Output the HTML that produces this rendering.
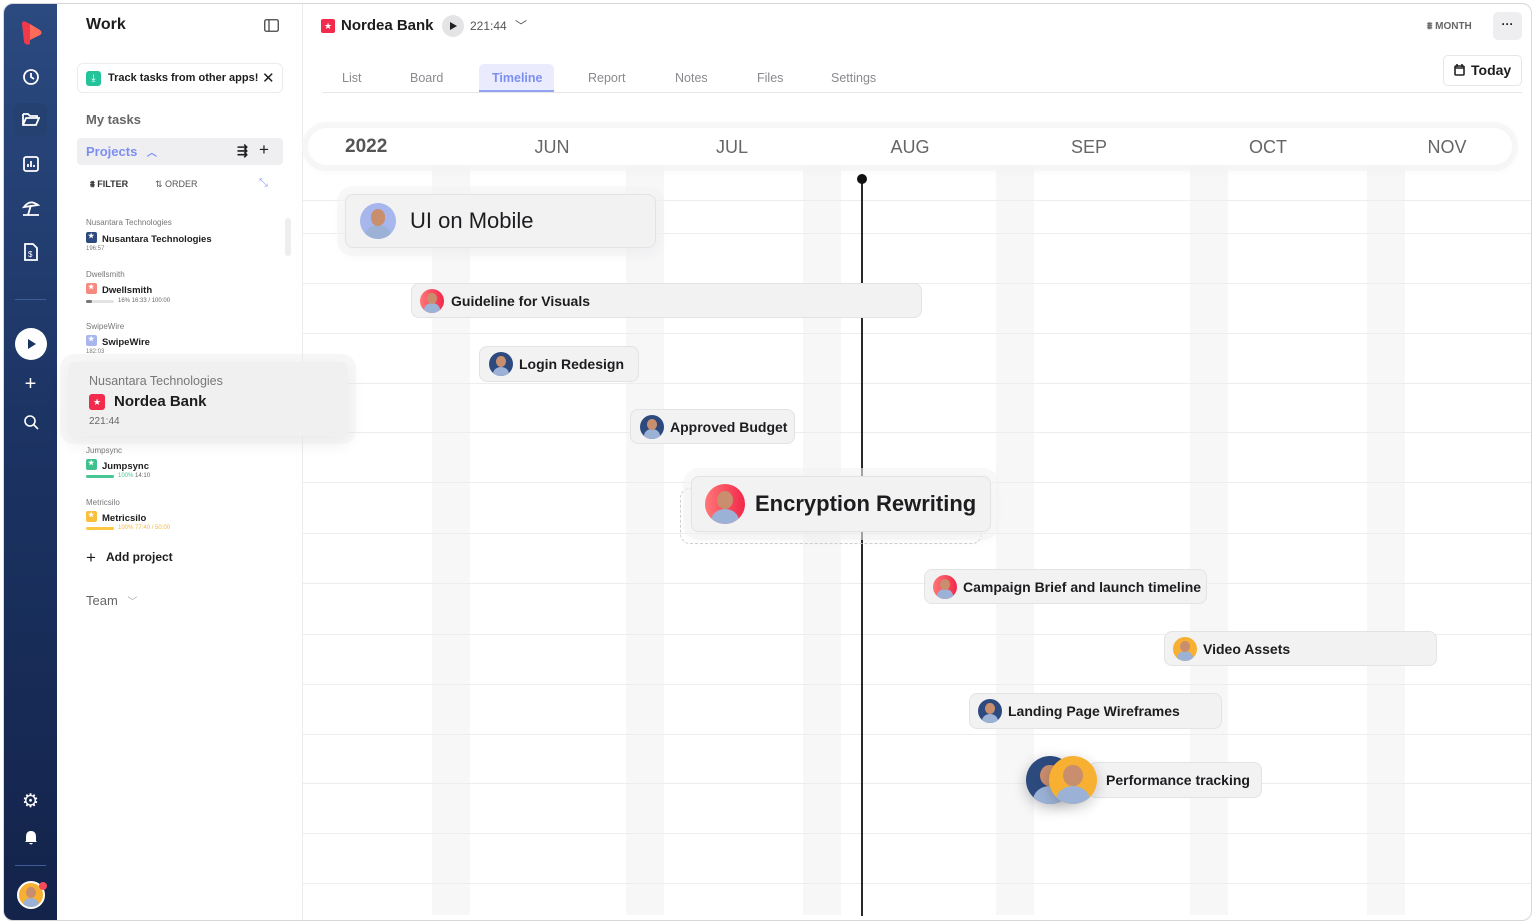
<!DOCTYPE html>
<html><head><meta charset="utf-8"><style>
*{box-sizing:border-box;margin:0;padding:0}
body{width:1536px;height:924px;background:#fff;font-family:"Liberation Sans",sans-serif;position:relative;overflow:hidden;color:#1d1d1f}
.a{position:absolute}
.frame{left:3px;top:3px;width:1529px;height:918px;border:1px solid #d8d8dc;border-radius:10px}
.side{left:4px;top:4px;width:53px;height:916px;border-radius:9px 0 0 9px;background:linear-gradient(#2b4a80,#1c3464 45%,#13234a)}
.ic{position:absolute;left:0;width:53px;text-align:center;color:#fff}
.panel{left:57px;top:4px;width:246px;height:916px;border-right:1px solid #ececef}
.hl{left:303px;height:1px;width:1228px;background:#ededf0}
.col{top:165px;height:750px;width:38px;background:#f7f7f8}
.bar{position:absolute;background:#f2f2f3;border:1px solid #e3e3e6;border-radius:8px;display:flex;align-items:center;font-size:14px;font-weight:bold;color:#1d1d1f;white-space:nowrap}
.av{border-radius:50%;flex:none;position:relative;overflow:hidden}
.av::after{content:"";position:absolute;left:30%;top:18%;width:40%;height:45%;border-radius:50%;background:#c98e6e}
.av::before{content:"";position:absolute;left:15%;top:62%;width:70%;height:60%;border-radius:50%;background:#9bb2d6}
.abs{position:absolute!important}
.blue{background:#2d4a7e}.red{background:linear-gradient(90deg,#f77,#f2284a)}.org{background:#f7b031}.lav{background:#a7b6ec}
.mo{position:absolute;top:137px;font-size:18px;color:#666;transform:translateX(-50%)}
.pi{position:absolute;left:86px;font-size:9px}
.sq{display:inline-block;width:11px;height:11px;border-radius:2px;vertical-align:-1px;margin-right:5px;position:relative}
.sq::after{content:"★";color:#fff;font-size:7px;position:absolute;left:2px;top:1px;line-height:8px}
</style></head><body>
<div class="a frame"></div>
<div class="a side">
 <svg class="a" style="left:15px;top:16px" width="24" height="26" viewBox="0 0 24 26"><path d="M3 4 Q3 0 7 2 L11 4 L11 24 Q7 26 5 22 Z" fill="#f03a4a"/><path d="M11 4 L21 10 Q24 13 21 15 L11 20 Z" fill="#ff6a5a"/></svg>
 <div class="ic" style="top:64px"><svg width="18" height="18" viewBox="0 0 18 18" fill="none" stroke="#fff" stroke-width="1.8"><circle cx="9" cy="9" r="7"/><path d="M9 5v4l3 2"/></svg></div>
 <div class="a" style="left:10px;top:99px;width:33px;height:33px;border-radius:7px;background:#244172"></div>
 <div class="ic" style="top:107px"><svg width="18" height="16" viewBox="0 0 18 16" fill="none" stroke="#fff" stroke-width="1.8"><path d="M1 3h5l2 2h7v2M1 3v11h13l3-7H4l-3 7"/></svg></div>
 <div class="ic" style="top:151px"><svg width="18" height="18" viewBox="0 0 18 18" fill="none" stroke="#fff" stroke-width="1.8"><rect x="2" y="2" width="14" height="14" rx="2"/><path d="M6 12V9M9 12V6M12 12v-2"/></svg></div>
 <div class="ic" style="top:195px"><svg width="18" height="18" viewBox="0 0 18 18" fill="none" stroke="#fff" stroke-width="1.8"><path d="M2 8 Q8 0 16 6 Z M9 6 L6 16 M1 16h16"/></svg></div>
 <div class="ic" style="top:239px"><svg width="16" height="18" viewBox="0 0 16 18" fill="none" stroke="#fff" stroke-width="1.8"><path d="M2 1h8l4 4v12H2z"/><text x="5" y="14" font-size="8" fill="#fff" stroke="none" font-family="Liberation Sans">$</text></svg></div>
 <div class="a" style="left:11px;top:295px;width:31px;height:1px;background:#3c5d98"></div>
 <div class="a" style="left:11px;top:324px;width:32px;height:32px;border-radius:50%;background:#fff"></div>
 <svg class="a" style="left:23px;top:334px" width="10" height="12"><path d="M1 1 L9 6 L1 11Z" fill="#1c3464"/></svg>
 <div class="ic" style="top:370px;font-size:20px;line-height:20px;font-weight:300">+</div>
 <div class="ic" style="top:410px"><svg width="16" height="16" viewBox="0 0 16 16" fill="none" stroke="#fff" stroke-width="1.6"><circle cx="7" cy="7" r="5"/><path d="M11 11l4 4"/></svg></div>
 <div class="ic" style="top:786px;font-size:19px">⚙</div>
 <div class="ic" style="top:826px"><svg width="14" height="16" viewBox="0 0 14 16"><path d="M7 1 Q12 1 12 7 L12 11 L13 12 L1 12 L2 11 L2 7 Q2 1 7 1Z M5 13h4 Q7 16 5 13" fill="#fff"/></svg></div>
 <div class="a" style="left:11px;top:861px;width:31px;height:1px;background:#3c5d98"></div>
 <div class="av org abs" style="left:13px;top:877px;width:28px;height:28px;border:2px solid #fff"></div>
 <div class="a" style="left:35px;top:878px;width:8px;height:8px;border-radius:50%;background:#f34b5b"></div>
</div>

<div class="a panel"></div>
<div class="a" style="left:86px;top:16px;font-size:16px;font-weight:bold">Work</div>
<svg class="a" style="left:264px;top:19px" width="15" height="13"><rect x=".75" y=".75" width="13.5" height="11.5" rx="1.5" fill="none" stroke="#444" stroke-width="1.3"/><path d="M5 1v11" stroke="#444" stroke-width="1.3"/></svg>
<div class="a" style="left:77px;top:63px;width:206px;height:30px;border:1px solid #ececef;border-radius:6px"></div>
<div class="a" style="left:86px;top:71px;width:15px;height:15px;border-radius:3px;background:#24c39a;color:#fff;font-size:10px;text-align:center;line-height:15px">⤓</div>
<div class="a" style="left:108px;top:72px;font-size:11px;font-weight:bold">Track tasks from other apps!</div>
<div class="a" style="left:262px;top:69px;font-size:15px">✕</div>
<div class="a" style="left:86px;top:112px;font-size:13px;color:#666;font-weight:bold">My tasks</div>
<div class="a" style="left:77px;top:138px;width:206px;height:27px;background:#efeff1;border-radius:4px"></div>
<div class="a" style="left:86px;top:144px;font-size:13px;color:#7c8ff1;font-weight:bold">Projects <span style="font-size:10px;margin-left:6px">︿</span></div>
<div class="a" style="left:237px;top:143px;font-size:13px;font-weight:bold">⇶</div>
<div class="a" style="left:259px;top:140px;font-size:17px">+</div>
<div class="a" style="left:90px;top:179px;font-size:9px;font-weight:bold;color:#333">⩩ FILTER</div>
<div class="a" style="left:155px;top:179px;font-size:9px;color:#555">⇅ ORDER</div>
<div class="a" style="left:259px;top:177px;font-size:11px;color:#8fa0f3">⤡</div>
<div class="a" style="left:285px;top:218px;width:6px;height:38px;border-radius:3px;background:#eee"></div>

<div class="pi" style="top:218px;color:#777;font-size:8px">Nusantara Technologies</div>
<div class="pi" style="top:232px;font-weight:bold;font-size:9.5px"><span class="sq" style="background:#2d4a7e"></span>Nusantara Technologies</div>
<div class="pi" style="top:246px;color:#777;font-size:6px">196:57</div>
<div class="pi" style="top:270px;color:#777;font-size:8px">Dwellsmith</div>
<div class="pi" style="top:283px;font-weight:bold;font-size:9.5px"><span class="sq" style="background:#f78a7e"></span>Dwellsmith</div>
<div class="a" style="left:86px;top:300px;width:28px;height:3px;border-radius:2px;background:#e3e3e3"></div><div class="a" style="left:86px;top:300px;width:6px;height:3px;border-radius:2px;background:#777"></div>
<div class="a" style="left:118px;top:298px;font-size:6px;color:#666">16% 16:33 / 100:00</div>
<div class="pi" style="top:322px;color:#777;font-size:8px">SwipeWire</div>
<div class="pi" style="top:335px;font-weight:bold;font-size:9.5px"><span class="sq" style="background:#a7b6ec"></span>SwipeWire</div>
<div class="pi" style="top:349px;color:#777;font-size:6px">182:03</div>
<div class="pi" style="top:446px;color:#777;font-size:8px">Jumpsync</div>
<div class="pi" style="top:459px;font-weight:bold;font-size:9.5px"><span class="sq" style="background:#3fc08e"></span>Jumpsync</div>
<div class="a" style="left:86px;top:475px;width:28px;height:3px;border-radius:2px;background:#46c693"></div>
<div class="a" style="left:118px;top:473px;font-size:6px;color:#46c693">100% <span style="color:#666">14:10</span></div>
<div class="pi" style="top:498px;color:#777;font-size:8px">Metricsilo</div>
<div class="pi" style="top:511px;font-weight:bold;font-size:9.5px"><span class="sq" style="background:#f9c03e"></span>Metricsilo</div>
<div class="a" style="left:86px;top:527px;width:28px;height:3px;border-radius:2px;background:#fbc640"></div>
<div class="a" style="left:118px;top:525px;font-size:6px;color:#f3b83a">100% 77:40 / 50:00</div>
<div class="a" style="left:86px;top:548px;font-size:17px">+</div>
<div class="a" style="left:106px;top:550px;font-size:12px;font-weight:bold">Add project</div>
<div class="a" style="left:86px;top:593px;font-size:13px;color:#666">Team <span style="font-size:10px;color:#aaa;margin-left:6px">﹀</span></div>

<!-- main header -->
<div class="a" style="left:321px;top:19px;width:14px;height:14px;border-radius:2px;background:#f22a4c;color:#fff;font-size:9px;text-align:center;line-height:14px">★</div>
<div class="a" style="left:341px;top:17px;font-size:15px;font-weight:bold">Nordea Bank</div>
<div class="a" style="left:442px;top:15px;width:22px;height:22px;border-radius:50%;background:#e4e4e6"></div>
<svg class="a" style="left:450px;top:22px" width="7" height="8"><path d="M0 0L7 4L0 8Z" fill="#222"/></svg>
<div class="a" style="left:470px;top:19px;font-size:12px;color:#555">221:44</div>
<div class="a" style="left:515px;top:17px;font-size:12px;color:#555">﹀</div>
<div class="a" style="left:1427px;top:21px;font-size:10px;color:#666;font-weight:bold">⩩ MONTH</div>
<div class="a" style="left:1493px;top:12px;width:29px;height:28px;border-radius:5px;background:#eeeef0;text-align:center;font-weight:bold;font-size:12px;line-height:24px">···</div>
<div class="a" style="left:1443px;top:55px;width:79px;height:31px;border:1px solid #e6e6e8;border-radius:5px"></div>
<svg class="a" style="left:1454px;top:64px" width="11" height="12"><rect x="1" y="2" width="9" height="9" rx="1" fill="none" stroke="#222" stroke-width="1.6"/><path d="M1 4h9M3 0v3M8 0v3" stroke="#222" stroke-width="1.6"/></svg>
<div class="a" style="left:1471px;top:62px;font-size:14px;font-weight:bold">Today</div>

<div class="a" style="left:479px;top:64px;width:75px;height:28px;border-radius:5px 5px 0 0;background:#eaecfd;border-bottom:2px solid #95a3f4"></div>
<div class="a" style="left:322px;top:92px;width:1200px;height:1px;background:#e6e6e8"></div>
<div class="a" style="top:71px;font-size:12.5px;color:#8a8a8f;left:342px">List</div>
<div class="a" style="top:71px;font-size:12.5px;color:#8a8a8f;left:410px">Board</div>
<div class="a" style="top:71px;font-size:12.5px;color:#7c8ff1;left:492px;font-weight:bold">Timeline</div>
<div class="a" style="top:71px;font-size:12.5px;color:#8a8a8f;left:588px">Report</div>
<div class="a" style="top:71px;font-size:12.5px;color:#8a8a8f;left:675px">Notes</div>
<div class="a" style="top:71px;font-size:12.5px;color:#8a8a8f;left:757px">Files</div>
<div class="a" style="top:71px;font-size:12.5px;color:#8a8a8f;left:831px">Settings</div>

<!-- grid -->
<div class="a col" style="left:432px"></div><div class="a col" style="left:626px"></div><div class="a col" style="left:803px"></div>
<div class="a col" style="left:996px"></div><div class="a col" style="left:1190px"></div><div class="a col" style="left:1367px"></div>
<div class="a hl" style="top:200px"></div><div class="a hl" style="top:233px"></div><div class="a hl" style="top:283px"></div>
<div class="a hl" style="top:333px"></div><div class="a hl" style="top:383px"></div><div class="a hl" style="top:432px"></div>
<div class="a hl" style="top:482px"></div><div class="a hl" style="top:533px"></div><div class="a hl" style="top:583px"></div>
<div class="a hl" style="top:634px"></div><div class="a hl" style="top:684px"></div><div class="a hl" style="top:734px"></div>
<div class="a hl" style="top:783px"></div><div class="a hl" style="top:833px"></div><div class="a hl" style="top:883px"></div>

<div class="a" style="left:308px;top:128px;width:1204px;height:37px;border-radius:19px;background:#fff;box-shadow:0 0 0 6px rgba(245,245,246,.8),0 2px 12px rgba(0,0,0,.07)"></div>
<div class="a" style="left:345px;top:136px;font-size:19px;font-weight:bold;color:#555">2022</div>
<div class="mo" style="left:552px">JUN</div><div class="mo" style="left:732px">JUL</div><div class="mo" style="left:910px">AUG</div>
<div class="mo" style="left:1089px">SEP</div><div class="mo" style="left:1268px">OCT</div><div class="mo" style="left:1447px">NOV</div>

<div class="a" style="left:861px;top:179px;width:2px;height:737px;background:#2a2a2a"></div>
<div class="a" style="left:857px;top:174px;width:10px;height:10px;border-radius:50%;background:#111"></div>

<div class="bar" style="left:345px;top:194px;width:311px;height:54px;font-size:22px;font-weight:normal;box-shadow:0 0 0 8px rgba(244,244,245,.6),0 4px 14px rgba(0,0,0,.07)"><div class="av lav" style="width:36px;height:36px;margin:0 14px 0 14px"></div>UI on Mobile</div>
<div class="bar" style="left:411px;top:283px;width:511px;height:35px"><div class="av red" style="width:24px;height:24px;margin:0 7px 0 8px"></div>Guideline for Visuals</div>
<div class="bar" style="left:479px;top:346px;width:160px;height:36px"><div class="av blue" style="width:24px;height:24px;margin:0 6px 0 9px"></div>Login Redesign</div>
<div class="bar" style="left:630px;top:409px;width:165px;height:35px"><div class="av blue" style="width:24px;height:24px;margin:0 6px 0 9px"></div>Approved Budget</div>
<div class="a" style="left:680px;top:488px;width:302px;height:56px;border:1.5px dashed #cfcfd3;border-radius:10px"></div>
<div class="bar" style="left:691px;top:476px;width:300px;height:56px;font-size:22px;box-shadow:0 0 0 8px rgba(244,244,245,.6),0 4px 14px rgba(0,0,0,.07)"><div class="av red" style="width:40px;height:40px;margin:0 10px 0 13px"></div>Encryption Rewriting</div>
<div class="bar" style="left:924px;top:569px;width:283px;height:35px"><div class="av red" style="width:24px;height:24px;margin:0 6px 0 8px"></div>Campaign Brief and launch timeline</div>
<div class="bar" style="left:1164px;top:631px;width:273px;height:35px"><div class="av org" style="width:24px;height:24px;margin:0 6px 0 8px"></div>Video Assets</div>
<div class="bar" style="left:969px;top:693px;width:253px;height:36px"><div class="av blue" style="width:24px;height:24px;margin:0 6px 0 8px"></div>Landing Page Wireframes</div>
<div class="bar" style="left:1088px;top:762px;width:174px;height:36px;padding-left:17px">Performance tracking</div>
<div class="av blue abs" style="left:1026px;top:756px;width:48px;height:48px;box-shadow:0 4px 14px rgba(0,0,0,.25)"></div>
<div class="av org abs" style="left:1049px;top:756px;width:48px;height:48px;box-shadow:0 4px 14px rgba(0,0,0,.2)"></div>

<!-- floating card -->
<div class="a" style="left:68px;top:362px;width:280px;height:74px;border-radius:6px;background:#f0f0f1;box-shadow:0 0 0 8px rgba(238,238,240,.45),0 6px 18px rgba(0,0,0,.09)"></div>
<div class="a" style="left:89px;top:374px;font-size:12.5px;color:#777">Nusantara Technologies</div>
<div class="a" style="left:89px;top:394px;width:16px;height:16px;border-radius:3px;background:#f22a4c;color:#fff;font-size:9px;text-align:center;line-height:16px">★</div>
<div class="a" style="left:114px;top:393px;font-size:15px;font-weight:bold">Nordea Bank</div>
<div class="a" style="left:89px;top:416px;font-size:10px;color:#666">221:44</div>
</body></html>
